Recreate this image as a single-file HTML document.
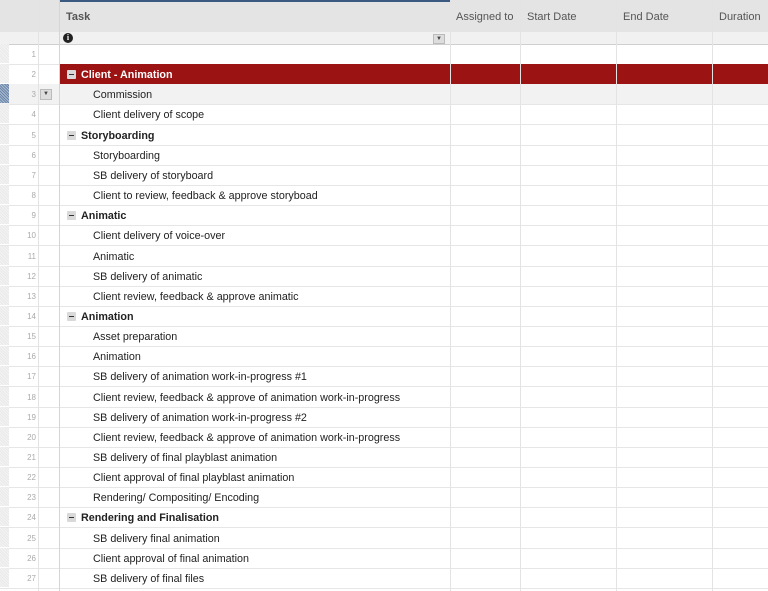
<!DOCTYPE html><html><head><style>
body{margin:0;width:768px;height:591px;overflow:hidden;background:#fff;font-family:"Liberation Sans",Arial,sans-serif;position:relative}
.a{position:absolute}
.hd{top:0;height:32px;background:#e4e4e4;left:0;width:768px;border-bottom:1px solid #d6d6d6}
.sh{top:32px;height:12px;background:#f1f1f1;left:0;width:768px;border-bottom:1px solid #cfcfcf}
.ht{top:11px;font-size:11px;color:#555}
.vl{top:0;height:591px;width:1px;background:#e3e3e3}
.row{position:absolute;left:0;width:768px;height:20px;border-bottom:1px solid #e6e6e6;font-size:10.75px;color:#222}
.n{position:absolute;left:10px;width:26px;text-align:right;font-size:8px;color:#aaa;top:6px}
.t{position:absolute;left:93px;top:5px}
.g{position:absolute;left:81px;top:5px;font-weight:bold}
.tg{position:absolute;left:67px;top:6px;width:9px;height:9px;background:#d9d9d9;border-radius:1px}
.tg:after{content:"";position:absolute;left:2px;top:4px;width:5px;height:1px;background:#333}
.gut{position:absolute;left:0;width:9px;height:19px;top:0;background:repeating-linear-gradient(45deg,#e9e9e9 0 1px,#f4f4f4 1px 2px)}
</style></head><body>
<div class="a hd"></div>
<div class="a" style="left:59px;top:0;width:391px;height:2px;background:#3a5a80"></div>
<div class="a sh"></div>
<div class="a ht" style="left:66px;font-weight:bold">Task</div>
<div class="a ht" style="left:456px">Assigned to</div>
<div class="a ht" style="left:527px">Start Date</div>
<div class="a ht" style="left:623px">End Date</div>
<div class="a ht" style="left:719px">Duration</div>
<div class="a" style="left:63px;top:33px;width:10px;height:10px;border-radius:50%;background:#222;color:#fff;font-size:8px;font-weight:bold;text-align:center;line-height:10px;font-family:'Liberation Serif',serif">i</div>
<div class="a" style="left:433px;top:34px;width:10px;height:8px;background:#ddd;border:1px solid #bbb;font-size:6px;text-align:center;line-height:8px;color:#444">▼</div>
<div id="rows"></div>
<div class="a vl" style="left:38px"></div>
<div class="a vl" style="left:59px;background:#d5d5d5"></div>
<div class="a vl" style="left:450px"></div>
<div class="a vl" style="left:520px"></div>
<div class="a vl" style="left:616px"></div>
<div class="a vl" style="left:712px"></div>
<script>
var d=[["",0],["Client - Animation",2],["Commission",0],["Client delivery of scope",0],["Storyboarding",1],["Storyboarding",0],["SB delivery of storyboard",0],["Client to review, feedback & approve storyboad",0],["Animatic",1],["Client delivery of voice-over",0],["Animatic",0],["SB delivery of animatic",0],["Client review, feedback & approve animatic",0],["Animation",1],["Asset preparation",0],["Animation",0],["SB delivery of animation work-in-progress #1",0],["Client review, feedback & approve of animation work-in-progress",0],["SB delivery of animation work-in-progress #2",0],["Client review, feedback & approve of animation work-in-progress",0],["SB delivery of final playblast animation",0],["Client approval of final playblast animation",0],["Rendering/ Compositing/ Encoding",0],["Rendering and Finalisation",1],["SB delivery final animation",0],["Client approval of final animation",0],["SB delivery of final files",0]];
var h="";d.forEach(function(r,i){var top=(44+i*20.15).toFixed(2);var bg=i==2?"background:#f2f2f2;":"";
h+='<div class="row" style="top:'+top+'px;'+bg+'"><div class="gut"'+(i==2?' style="background:repeating-linear-gradient(45deg,#6b86a8 0 1px,#a9bbd2 1px 2px)"':'')+'></div><div class="n">'+(i+1)+'</div>';
if(i==2)h+='<div class="a" style="left:40px;top:5px;width:10px;height:9px;background:#ddd;border:1px solid #bbb;font-size:6px;text-align:center;line-height:9px;color:#444">▼</div>';
if(r[1]==2)h+='<div class="a" style="left:60px;top:0;width:708px;height:20px;background:#9b1313"></div><div class="tg"></div><div class="g" style="color:#fff">'+r[0]+'</div>';
else if(r[1]==1)h+='<div class="tg"></div><div class="g">'+r[0]+'</div>';
else h+='<div class="t">'+r[0].replace(/&/g,"&amp;")+'</div>';
h+='</div>';});
document.getElementById("rows").innerHTML=h;
</script>
</body></html>
